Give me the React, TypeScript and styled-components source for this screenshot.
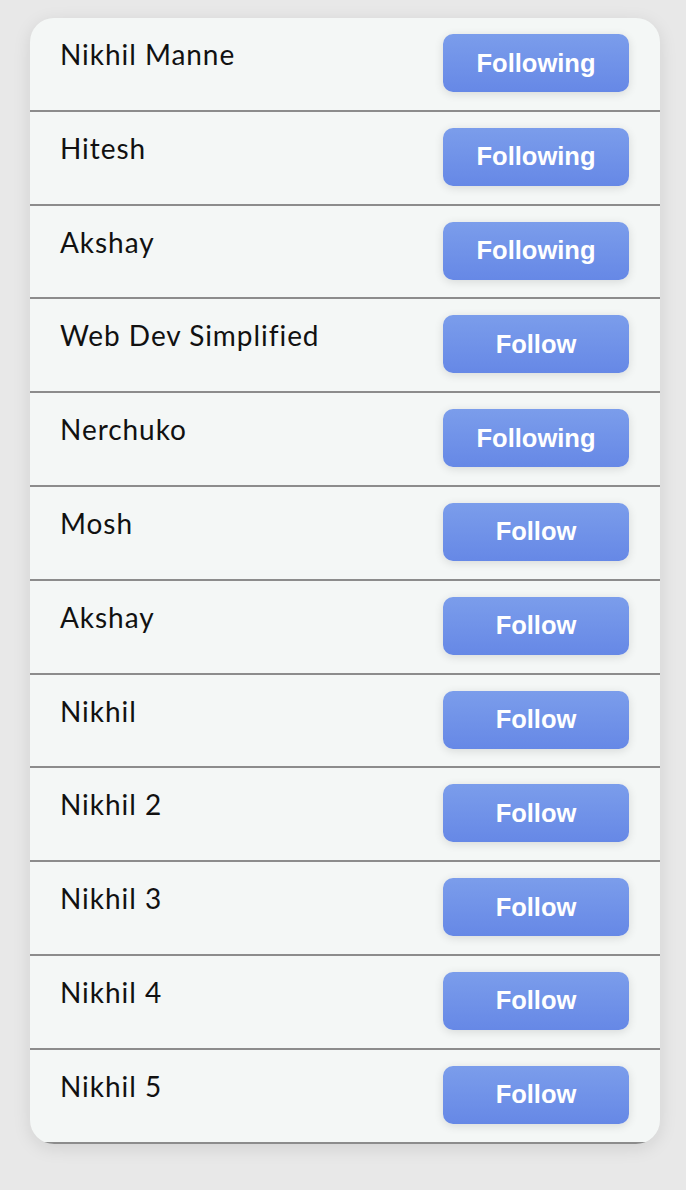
import React from "react";
import styled, { createGlobalStyle } from "styled-components";

const Global = createGlobalStyle`
  html, body { margin: 0; padding: 0; background: #e8e8e8; }
  body { font-family: "Lato", "Noto Sans", sans-serif; }
`;

const Page = styled.div`
  padding: 18px 26px 48px 30px;
  min-height: 1190px;
  box-sizing: border-box;
  background: #e8e8e8;
`;

const Card = styled.ul`
  list-style: none;
  margin: 0;
  padding: 0;
  width: 630px;
  background: #f4f7f6;
  border-radius: 24px;
  overflow: hidden;
  box-shadow: 0 4px 18px rgba(0, 0, 0, 0.1);
`;

const Row = styled.li`
  display: flex;
  align-items: flex-start;
  justify-content: space-between;
  height: 93.8px;
  box-sizing: border-box;
  padding: 16px 31px 0 30px;
  border-bottom: 2px solid #8c8c8c;
`;

const Name = styled.span`
  font-family: "Lato", "Noto Sans", sans-serif;
  font-size: 28px;
  line-height: 40px;
  color: #111;
  letter-spacing: 0.95px;
`;

const FollowButton = styled.button<{ $following: boolean }>`
  width: 186px;
  height: 58px;
  border: none;
  border-radius: 10px;
  background: linear-gradient(180deg, #7b9deb 0%, #6688e6 100%);
  box-shadow: 0 2px 10px rgba(0, 0, 0, 0.12);
  color: #fff;
  font-family: "Liberation Sans", Arial, sans-serif;
  font-weight: 700;
  font-size: 25.5px;
  display: flex;
  align-items: center;
  justify-content: center;
  padding: 0;
  cursor: pointer;
`;

const people: { name: string; following: boolean }[] = [
  { name: "Nikhil Manne", following: true },
  { name: "Hitesh", following: true },
  { name: "Akshay", following: true },
  { name: "Web Dev Simplified", following: false },
  { name: "Nerchuko", following: true },
  { name: "Mosh", following: false },
  { name: "Akshay", following: false },
  { name: "Nikhil", following: false },
  { name: "Nikhil 2", following: false },
  { name: "Nikhil 3", following: false },
  { name: "Nikhil 4", following: false },
  { name: "Nikhil 5", following: false },
];

export default function App() {
  return (
    <>
      <Global />
      <Page>
        <Card>
          {people.map((p, i) => (
            <Row key={i}>
              <Name>{p.name}</Name>
              <FollowButton $following={p.following}>
                {p.following ? "Following" : "Follow"}
              </FollowButton>
            </Row>
          ))}
        </Card>
      </Page>
    </>
  );
}
